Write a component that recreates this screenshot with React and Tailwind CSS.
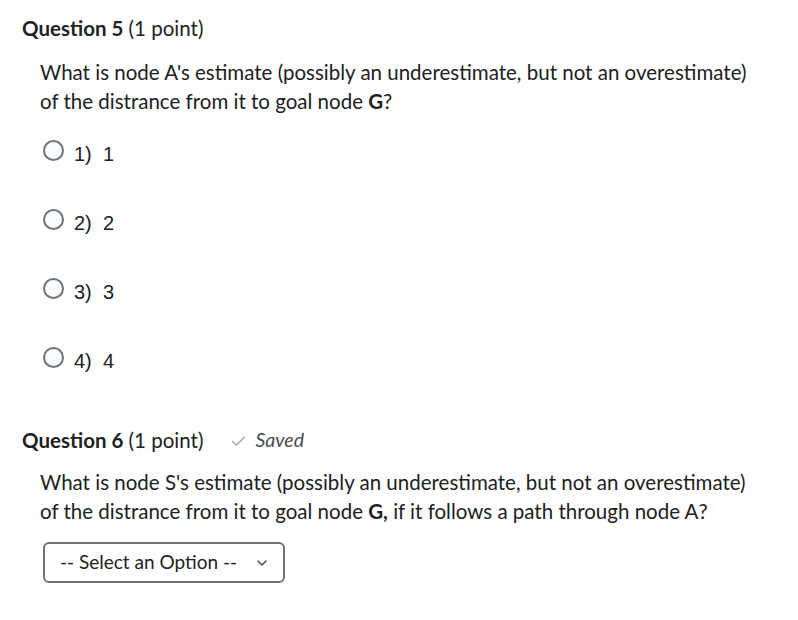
import React from "react";

const lato = { fontFamily: "Lato, 'Noto Sans', sans-serif" };

const Radio = ({ label }) => (
  <label className="flex items-center h-[28px] ml-[21px] cursor-pointer">
    <span className="w-[21px] h-[21px] rounded-full border-2 border-[#6e7477] bg-[#f9fbff] shrink-0"></span>
    <span className="ml-[10px] mt-[8px] text-[20px] text-[#202122] whitespace-pre font-['Liberation_Sans',Arial,sans-serif]">
      {label}
    </span>
  </label>
);

export default function App() {
  const options = ["1)  1", "2)  2", "3)  3", "4)  4"];
  return (
    <div className="bg-white w-[798px] h-[620px] px-[22px] pt-[14px] text-[#202122]" style={lato}>
      <h2 className="text-[20.5px] leading-[28px]">
        <span className="font-bold">Question 5</span> (1 point)
      </h2>
      <p className="ml-[18px] mt-[16px] text-[20.5px] leading-[29px]">
        What is node A's estimate (possibly an underestimate, but not an overestimate)
        <br />
        of the distrance from it to goal node <b>G</b>?
      </p>
      <div className="mt-[20px] flex flex-col gap-[41px]">
        {options.map((o) => (
          <Radio key={o} label={o} />
        ))}
      </div>

      <div className="flex items-center mt-[55px] h-[28px]">
        <h2 className="text-[20.5px] leading-[28px]">
          <span className="font-bold">Question 6</span> (1 point)
        </h2>
        <svg className="ml-[28px] mt-[2px]" width="15" height="12" viewBox="0 0 15 12" fill="none">
          <path d="M1.5 6.5 L5.5 10 L13.5 2" stroke="#a8acb0" strokeWidth="1.6" strokeLinecap="round" strokeLinejoin="round" />
        </svg>
        <span className="ml-[9px] text-[19.5px] italic text-[#494c4e]">Saved</span>
      </div>
      <p className="ml-[18px] mt-[14px] text-[20.5px] leading-[29px]">
        What is node S's estimate (possibly an underestimate, but not an overestimate)
        <br />
        of the distrance from it to goal node <b>G,</b> if it follows a path through node A?
      </p>
      <div className="ml-[21px] mt-[16px] w-[242px] h-[41px] border-2 border-[#6e7376] rounded-[6px] flex items-center pl-[15px] pr-[16px] justify-between bg-white">
        <span className="text-[19px] text-[#202122]">-- Select an Option --</span>
        <svg width="10" height="6" viewBox="0 0 10 6" fill="none">
          <path d="M1 1 L5 5 L9 1" stroke="#494c4e" strokeWidth="1.5" strokeLinecap="round" strokeLinejoin="round" />
        </svg>
      </div>
    </div>
  );
}
